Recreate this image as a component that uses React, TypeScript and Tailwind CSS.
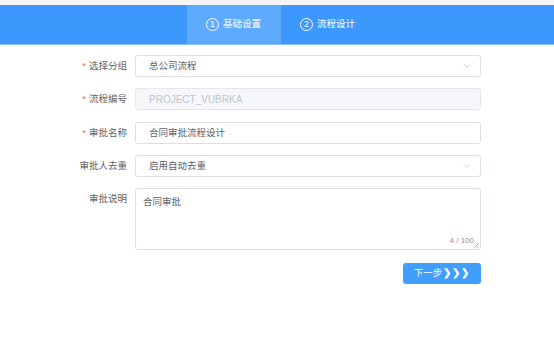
import { ChevronDown } from "lucide-react";

const font = {
  fontFamily: '"Liberation Sans", "Noto Sans CJK SC", sans-serif',
};

function Label({ text, required }: { text: string; required?: boolean }) {
  return (
    <div className="flex h-[22px] w-[75px] shrink-0 items-center justify-end pr-[8px] text-[9.5px] text-[#606266]">
      {required && <span className="mr-[3px] text-[#f56c6c]">*</span>}
      {text}
    </div>
  );
}

function Select({ value }: { value: string }) {
  return (
    <div className="flex h-[22px] flex-1 items-center justify-between rounded-[3px] border border-[#dcdfe6] bg-white pl-[13px] pr-[8px] text-[9.5px] text-[#606266]">
      <span>{value}</span>
      <ChevronDown className="h-[10px] w-[10px] text-[#b4b8bf]" strokeWidth={1.5} />
    </div>
  );
}

function Input({ value, disabled }: { value: string; disabled?: boolean }) {
  return (
    <div
      className={
        disabled
          ? "flex h-[22px] flex-1 items-center rounded-[3px] border border-[#e4e7ed] bg-[#f5f7fa] pl-[13px] text-[10px] text-[#c0c4cc]"
          : "flex h-[22px] flex-1 items-center rounded-[3px] border border-[#dcdfe6] bg-white pl-[13px] text-[9.5px] text-[#606266]"
      }
    >
      {value}
    </div>
  );
}

export default function App() {
  return (
    <div className="h-[346px] w-[554px] bg-white" style={font}>
      {/* Steps header */}
      <div className="h-[5px] bg-[#f5f5f5]" />
      <div className="flex h-[40px] justify-center border-b border-[#8cc4ff] bg-[#3d98fd] pl-[7px]">
        <div className="flex w-[94px] items-center justify-center gap-[4px] bg-[#5eaaff] text-[9.5px] text-white">
          <span className="flex h-[13px] w-[13px] items-center justify-center rounded-full border border-white text-[9px] leading-none">
            1
          </span>
          基础设置
        </div>
        <div className="flex w-[94px] items-center justify-center gap-[4px] text-[9.5px] text-white">
          <span className="flex h-[13px] w-[13px] items-center justify-center rounded-full border border-white text-[9px] leading-none">
            2
          </span>
          流程设计
        </div>
      </div>

      {/* Form */}
      <div className="ml-[60px] flex w-[421px] flex-col pt-[10px]">
        <div className="flex">
          <Label required text="选择分组" />
          <Select value="总公司流程" />
        </div>
        <div className="mt-[11px] flex">
          <Label required text="流程编号" />
          <Input disabled value="PROJECT_VUBRKA" />
        </div>
        <div className="mt-[12px] flex">
          <Label required text="审批名称" />
          <Input value="合同审批流程设计" />
        </div>
        <div className="mt-[11px] flex">
          <Label text="审批人去重" />
          <Select value="启用自动去重" />
        </div>
        <div className="mt-[11px] flex">
          <Label text="审批说明" />
          <div className="relative h-[62px] flex-1 rounded-[3px] border border-[#dcdfe6] bg-white px-[7px] pt-[6px] text-[9.5px] text-[#606266]">
            合同审批
            <span className="absolute bottom-[2px] right-[6px] text-[8px] text-[#909399]">
              4 / 100
            </span>
            <svg
              className="absolute bottom-[1px] right-[1px]"
              height="5"
              viewBox="0 0 5 5"
              width="5"
            >
              <path d="M5 0L0 5M5 2.5L2.5 5" stroke="#909399" strokeWidth="0.7" />
            </svg>
          </div>
        </div>
        <div className="mt-[13px] flex justify-end">
          <div className="flex h-[21px] w-[78px] items-center justify-center rounded-[3px] bg-[#409eff] text-[9.5px] text-white">
            下一步
            <span className="ml-[1px] font-bold tracking-[1px]">❯❯❯</span>
          </div>
        </div>
      </div>
    </div>
  );
}
